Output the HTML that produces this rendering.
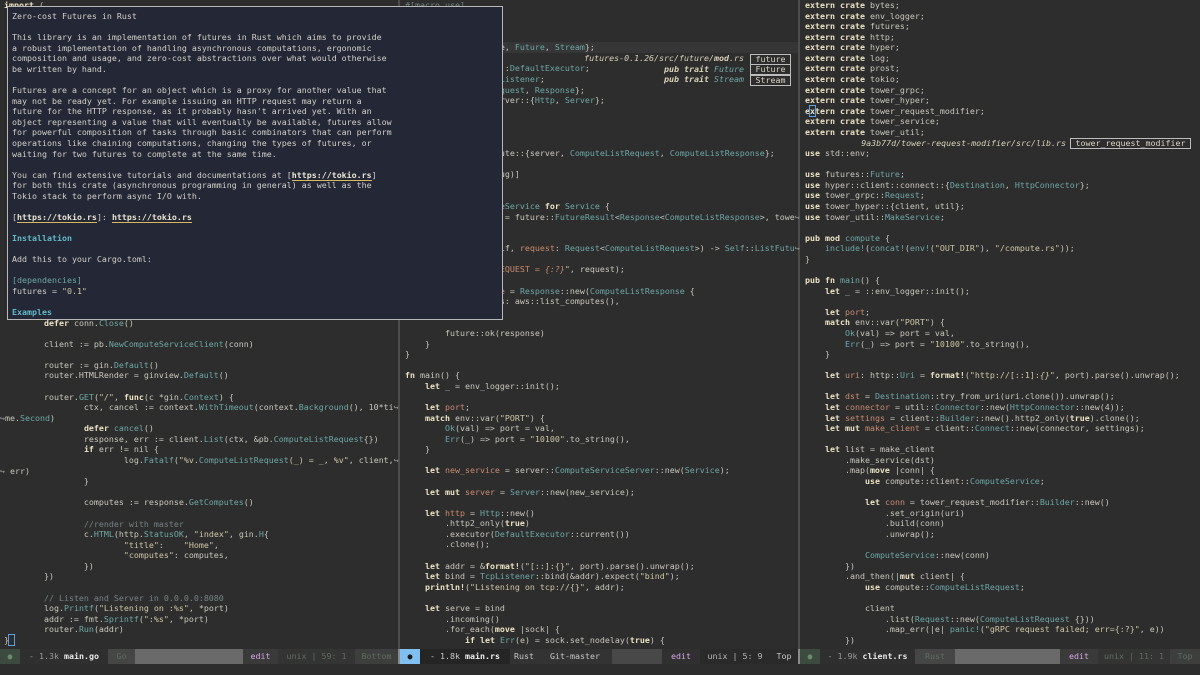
<!DOCTYPE html>
<html><head><meta charset="utf-8"><style>
html,body{margin:0;padding:0;width:1200px;height:675px;overflow:hidden;background:#2d2d2d;}
.p{position:absolute;top:0;margin:0;font-family:"DejaVu Sans Mono","Liberation Mono",monospace;font-size:8.3px;line-height:10.583px;color:#c9c7bd;white-space:pre;}
.k{color:#ece3c4;font-weight:bold}
.t{color:#6ea7a6}
.s{color:#cfc7a6}
.r{color:#c98b70}
.c{color:#748384}
.i{font-style:italic;color:#d8d2b8}
.w{color:#9a9a9a}
.sep{position:absolute;top:0;height:649px;width:2px;background:#4c4c4c}
.hl{position:absolute;height:10.583px;background:#363636}
.pop{position:absolute;left:7px;top:6px;width:494px;height:312px;background:#242836;border:1px solid #b8b8b8;}
.pop pre{position:absolute;left:4px;top:4px;margin:0;font-family:"DejaVu Sans Mono","Liberation Mono",monospace;font-size:8.3px;line-height:10.583px;color:#d2d0c8;white-space:pre}
.h{color:#62b9c8;font-weight:bold}
.u{font-weight:bold;color:#e8e4d4;border-bottom:1px solid #d8b860}
.box{position:absolute;height:9px;border:1px solid #bdbdbd;background:#2d2d2d;font-family:"DejaVu Sans Mono",monospace;font-size:8.3px;line-height:9px;color:#d8d4c4;text-align:center}
.an{position:absolute;font-family:"DejaVu Sans Mono",monospace;font-size:8.3px;line-height:10.583px;white-space:pre;text-align:right}
.st{position:absolute;top:649px;height:15px;font-family:"DejaVu Sans Mono",monospace;font-size:8.3px;line-height:15px;white-space:pre;text-align:center;color:#c9c7bd}
.cur{outline:1px solid #5aa0e0}
</style></head><body>
<div class="hl" style="left:401px;top:42.33px;width:397px"></div>
<div class="sep" style="left:398px"></div>
<div class="sep" style="left:798px"></div>

<pre class="p" style="left:4px"><span class="k">import</span> (</pre>
<pre class="p" style="left:4px;top:317.5px">        <span class="k">defer</span> conn.<span class="t">Close</span>()

        client := pb.<span class="t">NewComputeServiceClient</span>(conn)

        router := gin.<span class="t">Default</span>()
        router.HTMLRender = ginview.<span class="t">Default</span>()

        router.<span class="t">GET</span>(<span class="s">"/"</span>, <span class="k">func</span>(c *gin.<span class="t">Context</span>) {
                ctx, cancel := context.<span class="t">WithTimeout</span>(context.<span class="t">Background</span>(), 10*ti<span class="w">↪</span></pre>
<pre class="p" style="left:0px;top:412.7px"><span class="w">↪</span>me.<span class="t">Second</span>)</pre>
<pre class="p" style="left:4px;top:423.3px">                <span class="k">defer</span> <span class="t">cancel</span>()
                response, err := client.<span class="t">List</span>(ctx, &amp;pb.<span class="t">ComputeListRequest</span>{})
                <span class="k">if</span> err != nil {
                        log.<span class="t">Fatalf</span>(<span class="s">"%v.</span><span class="t">ComputeListRequest</span><span class="s">(_) = _, %v"</span>, client,<span class="w">↪</span></pre>
<pre class="p" style="left:0px;top:465.7px"><span class="w">↪</span> err)</pre>
<pre class="p" style="left:4px;top:476.2px">                }

                computes := response.<span class="t">GetComputes</span>()

                <span class="c">//render with master</span>
                c.<span class="t">HTML</span>(http.<span class="t">StatusOK</span>, <span class="s">"index"</span>, gin.<span class="t">H</span>{
                        <span class="s">"title"</span>:    <span class="s">"Home"</span>,
                        <span class="s">"computes"</span>: computes,
                })
        })

        <span class="c">// Listen and Server in 0.0.0.0:8080</span>
        log.<span class="t">Printf</span>(<span class="s">"Listening on :%s"</span>, *port)
        addr := fmt.<span class="t">Sprintf</span>(<span class="s">":%s"</span>, *port)
        router.<span class="t">Run</span>(addr)
}<span class="cur"> </span></pre>

<pre class="p" style="left:405px"><span class="c">#[macro_use]</span>



<span class="k">use</span> futures::{future, <span class="t">Future</span>, <span class="t">Stream</span>};

<span class="k">use</span> tokio::executor::<span class="t">DefaultExecutor</span>;
<span class="k">use</span> tokio::net::<span class="t">TcpListener</span>;
<span class="k">use</span> tower_grpc::{<span class="t">Request</span>, <span class="t">Response</span>};
<span class="k">use</span> tower_hyper::server::{<span class="t">Http</span>, <span class="t">Server</span>};




<span class="k">use</span> crate::pb::compute::{server, <span class="t">ComputeListRequest</span>, <span class="t">ComputeListResponse</span>};

#[derive(Clone, Debug)]


<span class="k">impl</span> server::<span class="t">ComputeService</span> <span class="k">for</span> <span class="t">Service</span> {
    <span class="k">type</span> ListFuture = future::<span class="t">FutureResult</span>&lt;<span class="t">Response</span>&lt;<span class="t">ComputeListResponse</span>&gt;, towe<span class="w">↪</span>


    <span class="k">fn</span> list(&amp;<span class="k">mut</span> self, <span class="r">request</span>: <span class="t">Request</span>&lt;<span class="t">ComputeListRequest</span>&gt;) -&gt; <span class="t">Self</span>::<span class="t">ListFutu</span><span class="w">↪</span>

        <span class="k">println!</span>(<span class="r">"REQUEST = </span><span class="r" style="font-style:italic">{:?}</span><span class="s">"</span>, request);

        <span class="k">let</span> <span class="r">response</span> = <span class="t">Response</span>::new(<span class="t">ComputeListResponse</span> {
            computes: aws::list_computes(),
        });

        future::ok(response)
    }
}

<span class="k">fn</span> main() {
    <span class="k">let</span> _ = env_logger::init();

    <span class="k">let</span> <span class="r">port</span>;
    <span class="k">match</span> env::var(<span class="s">"PORT"</span>) {
        <span class="t">Ok</span>(val) =&gt; port = val,
        <span class="t">Err</span>(_) =&gt; port = <span class="s">"10100"</span>.to_string(),
    }

    <span class="k">let</span> <span class="r">new_service</span> = server::<span class="t">ComputeServiceServer</span>::new(<span class="t">Service</span>);

    <span class="k">let</span> <span class="k">mut</span> <span class="r">server</span> = <span class="t">Server</span>::new(new_service);

    <span class="k">let</span> <span class="r">http</span> = <span class="t">Http</span>::new()
        .http2_only(<span class="k">true</span>)
        .executor(<span class="t">DefaultExecutor</span>::current())
        .clone();

    <span class="k">let</span> addr = &amp;<span class="k">format!</span>(<span class="s">"[::]:{}"</span>, port).parse().unwrap();
    <span class="k">let</span> bind = <span class="t">TcpListener</span>::bind(&amp;addr).expect(<span class="s">"bind"</span>);
    <span class="k">println!</span>(<span class="s">"Listening on tcp://{}"</span>, addr);

    <span class="k">let</span> serve = bind
        .incoming()
        .for_each(<span class="k">move</span> |sock| {
            <span class="k">if</span> <span class="k">let</span> <span class="t">Err</span>(e) = sock.set_nodelay(<span class="k">true</span>) {</pre>

<div class="an i" style="left:520px;top:52.9px;width:224px">futures-0.1.26/src/future/<b>mod</b>.rs</div>
<div class="an" style="left:560px;top:63.5px;width:184px"><b class="i">pub trait</b> <span class="t" style="font-style:italic">Future</span></div>
<div class="an" style="left:560px;top:74.1px;width:184px"><b class="i">pub trait</b> <span class="t" style="font-style:italic">Stream</span></div>
<div class="box" style="left:750px;top:53.5px;width:39px">future</div>
<div class="box" style="left:750px;top:64px;width:39px">Future</div>
<div class="box" style="left:750px;top:74.5px;width:39px">Stream</div>

<pre class="p" style="left:805px"><span class="k">extern crate</span> bytes;
<span class="k">extern crate</span> env_logger;
<span class="k">extern crate</span> futures;
<span class="k">extern crate</span> http;
<span class="k">extern crate</span> hyper;
<span class="k">extern crate</span> log;
<span class="k">extern crate</span> prost;
<span class="k">extern crate</span> tokio;
<span class="k">extern crate</span> tower_grpc;
<span class="k">extern crate</span> tower_hyper;
<span class="k">e<span class="cur">x</span>tern crate</span> tower_request_modifier;
<span class="k">extern crate</span> tower_service;
<span class="k">extern crate</span> tower_util;

<span class="k">use</span> std::env;

<span class="k">use</span> futures::<span class="t">Future</span>;
<span class="k">use</span> hyper::client::connect::{<span class="t">Destination</span>, <span class="t">HttpConnector</span>};
<span class="k">use</span> tower_grpc::<span class="t">Request</span>;
<span class="k">use</span> tower_hyper::{client, util};
<span class="k">use</span> tower_util::<span class="t">MakeService</span>;

<span class="k">pub</span> <span class="k">mod</span> <span class="t">compute</span> {
    <span class="t">include!</span>(<span class="t">concat!</span>(<span class="t">env!</span>(<span class="s">"OUT_DIR"</span>), <span class="s">"/compute.rs"</span>));
}

<span class="k">pub</span> <span class="k">fn</span> <span class="t">main</span>() {
    <span class="k">let</span> _ = ::env_logger::init();

    <span class="k">let</span> <span class="r">port</span>;
    <span class="k">match</span> env::var(<span class="s">"PORT"</span>) {
        <span class="t">Ok</span>(val) =&gt; port = val,
        <span class="t">Err</span>(_) =&gt; port = <span class="s">"10100"</span>.to_string(),
    }

    <span class="k">let</span> <span class="r">uri</span>: http::<span class="t">Uri</span> = <span class="k">format!</span>(<span class="s">"http://[::1]:</span><span class="s" style="font-style:italic">{}</span><span class="s">"</span>, port).parse().unwrap();

    <span class="k">let</span> <span class="r">dst</span> = <span class="t">Destination</span>::try_from_uri(uri.clone()).unwrap();
    <span class="k">let</span> <span class="r">connector</span> = util::<span class="t">Connector</span>::new(<span class="t">HttpConnector</span>::new(4));
    <span class="k">let</span> <span class="r">settings</span> = client::<span class="t">Builder</span>::new().http2_only(<span class="k">true</span>).clone();
    <span class="k">let</span> <span class="k">mut</span> <span class="r">make_client</span> = client::<span class="t">Connect</span>::new(connector, settings);

    <span class="k">let</span> list = make_client
        .make_service(dst)
        .map(<span class="k">move</span> |conn| {
            <span class="k">use</span> compute::client::<span class="t">ComputeService</span>;

            <span class="k">let</span> <span class="r">conn</span> = tower_request_modifier::<span class="t">Builder</span>::new()
                .set_origin(uri)
                .build(conn)
                .unwrap();

            <span class="t">ComputeService</span>::new(conn)
        })
        .and_then(|<span class="k">mut</span> client| {
            <span class="k">use</span> compute::<span class="t">ComputeListRequest</span>;

            client
                .list(<span class="t">Request</span>::new(<span class="t">ComputeListRequest</span> {}))
                .map_err(|e| <span class="t">panic!</span>(<span class="s">"gRPC request failed; err={:?}"</span>, e))
        })</pre>
<div class="an i" style="left:860px;top:137.6px;width:206px">9a3b77d/tower-request-modifier/src/lib.rs</div>
<div class="box" style="left:1070px;top:138px;width:119px">tower_request_modifier</div>

<div class="pop"><pre>Zero-cost Futures in Rust

This library is an implementation of futures in Rust which aims to provide
a robust implementation of handling asynchronous computations, ergonomic
composition and usage, and zero-cost abstractions over what would otherwise
be written by hand.

Futures are a concept for an object which is a proxy for another value that
may not be ready yet. For example issuing an HTTP request may return a
future for the HTTP response, as it probably hasn't arrived yet. With an
object representing a value that will eventually be available, futures allow
for powerful composition of tasks through basic combinators that can perform
operations like chaining computations, changing the types of futures, or
waiting for two futures to complete at the same time.

You can find extensive tutorials and documentations at [<span class="u">https://tokio.rs</span>]
for both this crate (asynchronous programming in general) as well as the
Tokio stack to perform async I/O with.

[<span class="u">https://tokio.rs</span>]: <span class="u">https://tokio.rs</span>

<span class="h">Installation</span>

Add this to your Cargo.toml:

<span class="t">[dependencies]</span>
futures = <span class="s">"0.1"</span>

<span class="h">Examples</span></pre></div>

<div style="position:absolute;left:0;top:649px;width:1200px;height:15px;background:#3a3a3a"></div>
<div class="st" style="left:0;width:20px;background:#3d4a3f;color:#6a8a6a">●</div>
<div class="st" style="left:20px;width:88px;background:#2f2f2f;color:#9a9a9a">- 1.3k <b style="color:#e8e8e8">main.go</b></div>
<div class="st" style="left:108px;width:27px;background:#464646;color:#5e6e5e">Go</div>
<div class="st" style="left:135px;width:108px;background:#6a6a6a"></div>
<div class="st" style="left:243px;width:35px;background:#3a3a3a;color:#d8a8e8">edit</div>
<div class="st" style="left:278px;width:77px;background:#343434;color:#5e6e5e">unix | 59: 1</div>
<div class="st" style="left:355px;width:43px;background:#3e3e3e;color:#5e6e5e">Bottom</div>
<div class="st" style="left:398px;width:2px;background:#8a8a8a"></div>
<div class="st" style="left:400px;width:20px;background:#7fc0f0;color:#1a1a1a">●</div>
<div class="st" style="left:420px;width:90px;background:#252525;color:#c8c8c8">- 1.8k <b style="color:#f0f0f0">main.rs</b></div>
<div class="st" style="left:510px;width:28px;background:#333;color:#c8c8c8">Rust</div>
<div class="st" style="left:538px;width:74px;background:#333;color:#c8c8c8">Git-master</div>
<div class="st" style="left:612px;width:50px;background:#484848"></div>
<div class="st" style="left:662px;width:38px;background:#303030;color:#d8a8e8">edit</div>
<div class="st" style="left:700px;width:70px;background:#2a2a2a;color:#b8b8b8">unix | 5: 9</div>
<div class="st" style="left:770px;width:28px;background:#2a2a2a;color:#c8c8c8">Top</div>
<div class="st" style="left:798px;width:2px;background:#8a8a8a"></div>
<div class="st" style="left:800px;width:20px;background:#3d4a3f;color:#6a8a6a">●</div>
<div class="st" style="left:820px;width:95px;background:#2f2f2f;color:#9a9a9a">- 1.9k <b style="color:#e8e8e8">client.rs</b></div>
<div class="st" style="left:915px;width:40px;background:#464646;color:#5e6e5e">Rust</div>
<div class="st" style="left:955px;width:105px;background:#6a6a6a"></div>
<div class="st" style="left:1060px;width:38px;background:#3a3a3a;color:#d8a8e8">edit</div>
<div class="st" style="left:1098px;width:72px;background:#343434;color:#5e6e5e">unix | 11: 1</div>
<div class="st" style="left:1170px;width:30px;background:#3e3e3e;color:#5e6e5e">Top</div>
</body></html>
